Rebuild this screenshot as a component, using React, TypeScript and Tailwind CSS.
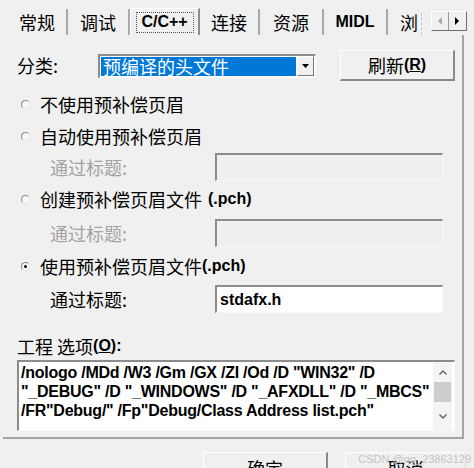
import React from 'react';

// 项目设置对话框 - C/C++ 页（预编译头）
const cjk = "font-['Noto_Sans_CJK_SC','Noto_Sans',sans-serif]";
const bold = "font-['Liberation_Sans','Noto_Sans_CJK_SC',sans-serif] font-bold";

function Tab({ label, width, ascii }: { label: string; width: number; ascii?: boolean }) {
  return (
    <div
      className="flex h-[26px] items-center justify-center border-r-2 border-[#a9a9a9]"
      style={{ width }}
    >
      <span className={ascii ? `${bold} text-[16px]` : `${cjk} text-[18px]`}>{label}</span>
    </div>
  );
}

function Radio({ checked, children }: { checked?: boolean; children: React.ReactNode }) {
  return (
    <div className="flex h-[32px] items-center pl-[18px]">
      <div className="flex h-[9px] w-[9px] items-center justify-center rounded-full border border-t-[#8a8a8a] border-l-[#8a8a8a] border-r-[#e6e6e6] border-b-[#e6e6e6] bg-[#f8f8f8]">
        {checked && <div className="h-[3px] w-[3px] rounded-full bg-black" />}
      </div>
      <div className="ml-[10px] flex items-center">{children}</div>
    </div>
  );
}

function Field({
  label,
  enabled,
  value,
  top,
}: {
  label: string;
  enabled?: boolean;
  value?: string;
  top: number;
}) {
  return (
    <div className="flex h-[28px] items-center" style={{ marginTop: top }}>
      <span
        className={`${cjk} w-[212px] pl-[47px] text-[18px] ${enabled ? 'text-black' : 'text-[#a3a3a3]'}`}
      >
        {label}
      </span>
      <div
        className={`flex h-[28px] w-[228px] items-center border-t-2 border-l-2 border-t-[#8c8c8c] border-l-[#8c8c8c] border-r border-b border-r-[#f8f8f8] border-b-[#f8f8f8] pl-[3px] ${enabled ? 'bg-white' : 'bg-[#efefef]'}`}
      >
        {value && <span className={`${bold} text-[16px]`}>{value}</span>}
      </div>
    </div>
  );
}

export default function App() {
  return (
    <div className="relative h-[468px] w-[474px] overflow-hidden bg-[#f0f0f0] text-black">
      {/* 选项卡 */}
      <div className="flex h-[35px] items-end pl-[8px]">
        <Tab label="常规" width={60} />
        <Tab label="调试" width={62} />
        <div className="flex h-[27px] w-[70px] items-center justify-center border-t border-l border-white border-r-2 border-r-[#8d8d8d] bg-[#f0f0f0]">
          <div className="flex h-[21px] w-[58px] items-center justify-center border border-dotted border-[#555]">
            <span className={`${bold} text-[16px]`}>C/C++</span>
          </div>
        </div>
        <Tab label="连接" width={60} />
        <Tab label="资源" width={64} />
        <Tab label="MIDL" width={64} ascii />
        <div className="flex h-[26px] w-[30px] items-center justify-end overflow-hidden">
          <span className={`${cjk} text-[18px]`}>浏</span>
        </div>
        <div className="ml-[1px] h-[22px] w-[3px] self-end border-r border-dashed border-[#c8c8c8]" />
        <div className="mb-[-1px] ml-[9px] mt-[6px] flex h-[20px] w-[36px] self-center border border-t-white border-l-white border-r-[#6e6e6e] border-b-[#6e6e6e] bg-[#f0f0f0]">
          <div className="flex w-1/2 items-center justify-center border-r border-[#9a9a9a]">
            <svg width="5" height="8" viewBox="0 0 5 8">
              <path d="M4 0 L0 4 L4 8 Z" fill="#a8a8a8" />
            </svg>
          </div>
          <div className="flex w-1/2 items-center justify-center">
            <svg width="5" height="8" viewBox="0 0 5 8">
              <path d="M0 0 L4 4 L0 8 Z" fill="#000" />
            </svg>
          </div>
        </div>
      </div>

      {/* 页面主体 */}
      <div className="ml-[3px] flex h-[404px] w-[461px] flex-col border-r-2 border-b-2 border-[#a4a4a4]">
        <div className="mt-[15px] flex h-[31px] items-center">
          <span className={`${cjk} w-[95px] pl-[14px] text-[18px]`}>分类:</span>
          <div className="flex h-[24px] w-[218px] items-center border-t-2 border-l-2 border-t-[#8c8c8c] border-l-[#8c8c8c] border-r border-b border-r-[#fafafa] border-b-[#fafafa] bg-white pl-[1px]">
            <div className="flex h-[19px] w-[195px] items-center bg-[#0078d7] pl-[2px]">
              <span className={`${cjk} text-[18px] leading-none text-white`}>预编译的头文件</span>
            </div>
            <div className="ml-[1px] flex h-[20px] w-[17px] items-center justify-center border border-t-white border-l-white border-r-[#777] border-b-[#777] bg-[#f0f0f0]">
              <svg width="7" height="4" viewBox="0 0 7 4">
                <path d="M0 0 H7 L3.5 4 Z" fill="#000" />
              </svg>
            </div>
          </div>
          <button className="ml-[24px] flex h-[31px] w-[115px] items-center justify-center border border-t-white border-l-white border-r-2 border-b-2 border-r-[#8a8a8a] border-b-[#8a8a8a] bg-[#f0f0f0]">
            <span className={`${cjk} text-[18px]`}>刷新</span>
            <span className={`${bold} text-[16px]`}>
              (<span className="underline">R</span>)
            </span>
          </button>
        </div>

        <div className="mt-[7px]">
          <Radio>
            <span className={`${cjk} text-[18px]`}>不使用预补偿页眉</span>
          </Radio>
          <Radio>
            <span className={`${cjk} text-[18px]`}>自动使用预补偿页眉</span>
          </Radio>
        </div>
        <Field label="通过标题:" top={1} />
        <div className="mt-[2px]">
          <Radio>
            <span className={`${cjk} text-[18px]`}>创建预补偿页眉文件</span>
            <span className={`${bold} ml-[6px] text-[16px]`}>(.pch)</span>
          </Radio>
        </div>
        <Field label="通过标题:" top={4} />
        <div className="mt-[3px]">
          <Radio checked>
            <span className={`${cjk} text-[18px]`}>使用预补偿页眉文件</span>
            <span className={`${bold} text-[16px]`}>(.pch)</span>
          </Radio>
        </div>
        <Field label="通过标题:" enabled value="stdafx.h" top={3} />

        <div className="mt-[21px] flex h-[24px] items-center pl-[14px]">
          <span className={`${cjk} text-[18px]`}>工程 选项</span>
          <span className={`${bold} text-[16px]`}>
            (<span className="underline">O</span>):
          </span>
        </div>
        <div className="ml-[14px] mt-[2px] flex h-[71px] w-[438px] border-t-2 border-l-2 border-t-[#8c8c8c] border-l-[#8c8c8c] border-r border-b border-r-[#fafafa] border-b-[#fafafa] bg-white">
          <div className={`${bold} flex-1 overflow-hidden whitespace-nowrap pl-[2px] pt-[1px] text-[16px] leading-[19px] tracking-[-0.25px]`}>
            <div>/nologo /MDd /W3 /Gm /GX /ZI /Od /D "WIN32" /D</div>
            <div>"_DEBUG" /D "_WINDOWS" /D "_AFXDLL" /D "_MBCS"</div>
            <div>/FR"Debug/" /Fp"Debug/Class Address list.pch"</div>
          </div>
          <div className="mr-[2px] flex w-[19px] flex-col items-center bg-[#f4f4f4]">
            <div className="flex h-[20px] items-center">
              <svg width="8" height="5" viewBox="0 0 8 5">
                <path d="M0.5 4.5 L4 1 L7.5 4.5" fill="none" stroke="#606060" strokeWidth="1.4" />
              </svg>
            </div>
            <div className="h-[20px] w-[17px] bg-[#cdcdcd]" />
            <div className="flex flex-1 items-center">
              <svg width="8" height="5" viewBox="0 0 8 5">
                <path d="M0.5 0.5 L4 4 L7.5 0.5" fill="none" stroke="#606060" strokeWidth="1.4" />
              </svg>
            </div>
          </div>
        </div>
      </div>

      {/* 底部按钮 */}
      <div className="mt-[13px] flex gap-[17px] pl-[203px]">
        <button className="flex h-[36px] w-[125px] items-start justify-center border border-t-white border-l-white border-r-2 border-b-2 border-r-[#8a8a8a] border-b-[#8a8a8a] pt-[2px]">
          <span className={`${cjk} text-[18px]`}>确定</span>
        </button>
        <button className="flex h-[36px] w-[121px] items-start justify-center border border-t-white border-l-white border-[#dcdcdc] pt-[2px]">
          <span className={`${cjk} text-[18px]`}>取消</span>
        </button>
      </div>
      <span className="absolute bottom-[1px] right-[3px] font-['Liberation_Sans',sans-serif] text-[11px] text-[#c4c4c4]">
        CSDN @qq_23863129
      </span>
    </div>
  );
}
